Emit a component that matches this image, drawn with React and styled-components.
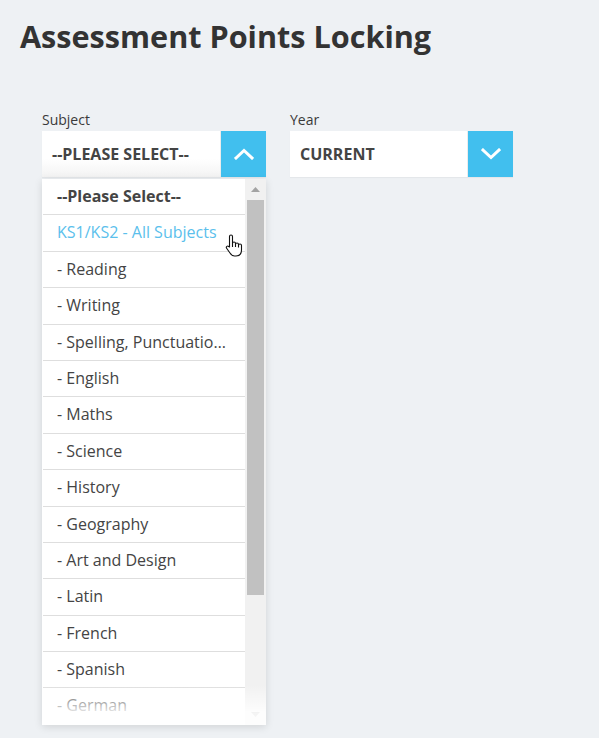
import React from 'react'
import styled, { createGlobalStyle } from 'styled-components'

const GlobalStyle = createGlobalStyle`
    html, body {
        margin: 0;
        padding: 0;
        background: #eef1f4;
        font-family: "Open Sans", "Liberation Sans", sans-serif;
        color: #444;
    }
    * { box-sizing: border-box; }
`;

const Page = styled.div`
    min-height: 738px;
    padding: 15px 20px 0 20px;
`;
const Title = styled.h1`
    margin: 0;
    font-size: 30.6px;
    line-height: 42px;
    font-weight: 700;
    color: #333;
`;
const FormRow = styled.div`
    display: flex;
    gap: 24px;
    margin: 53px 0 0 22px;
`;
const Field = styled.div`
    position: relative;
    width: ${p => p.w}px;
`;
const Label = styled.div`
    font-size: 14px;
    line-height: 19px;
    color: #3a3a3a;
    margin-bottom: 2px;
`;
const SelectBox = styled.div`
    display: flex;
    height: 46px;
    background: ${p => p.open ? 'linear-gradient(#fff 60%, #f3f3f3)' : '#fff'};
    box-shadow: 0 1px 1px rgba(0, 0, 0, 0.04);
`;
const SelectText = styled.div`
    flex: 1;
    display: flex;
    align-items: center;
    padding-left: 10px;
    font-size: 16px;
    font-weight: 700;
    color: #444;
    border-right: 1px solid #ececec;
`;
const ArrowButton = styled.div`
    width: 45px;
    background: #41bfee;
    display: flex;
    align-items: center;
    justify-content: center;
`;
const Dropdown = styled.div`
    position: absolute;
    top: 69px;
    left: 0;
    width: 224px;
    height: 546px;
    display: flex;
    background: #fff;
    box-shadow: 0 2px 8px rgba(0, 0, 0, 0.12);
    z-index: 2;
`;
const List = styled.div`
    flex: 1;
    min-width: 0;
    overflow: hidden;
    padding-left: 1px;
`;
const Option = styled.div`
    height: 36.4px;
    line-height: 35.4px;
    padding: 0 14px;
    font-size: 16px;
    font-weight: ${p => p.bold ? 700 : 400};
    color: ${p => p.active ? '#5bbfec' : '#444'};
    border-bottom: 1px solid #dedede;
    white-space: nowrap;
    overflow: hidden;
    text-overflow: ellipsis;
    &:last-child { border-bottom: none; }
`;
const Scrollbar = styled.div`
    width: 21px;
    background: #f1f1f1;
    display: flex;
    flex-direction: column;
    align-items: center;
    padding: 0 2px;
`;
const ScrollArrow = styled.div`
    height: 21px;
    display: flex;
    align-items: center;
    justify-content: center;
`;
const Track = styled.div`
    flex: 1;
    width: 100%;
`;
const Thumb = styled.div`
    height: 395px;
    background: #c1c1c1;
`;
const Fade = styled.div`
    position: absolute;
    left: 0;
    right: 0;
    bottom: 0;
    height: 40px;
    background: linear-gradient(rgba(255, 255, 255, 0), rgba(255, 255, 255, 0.88) 70%);
    pointer-events: none;
`;
const Cursor = styled.svg`
    position: absolute;
    left: 183px;
    top: 55px;
`;

const Chevron = ({ up }) => (
    <svg width="20" height="12" viewBox="0 0 20 12">
        <path d={up ? 'M2 10 L10 2.5 L18 10' : 'M2 2 L10 9.5 L18 2'} fill="none" stroke="#fff" strokeWidth="3" strokeLinecap="square" />
    </svg>
);

const Triangle = ({ up }) => (
    <svg width="9" height="5" viewBox="0 0 9 5">
        <path d={up ? 'M0 5 L4.5 0 L9 5 Z' : 'M0 0 L4.5 5 L9 0 Z'} fill="#a3a3a3" />
    </svg>
);

const subjects = [
    '- Reading', '- Writing', '- Spelling, Punctuation and Grammar', '- English', '- Maths',
    '- Science', '- History', '- Geography', '- Art and Design', '- Latin', '- French',
    '- Spanish', '- German'
];

export default function App() {
    return (
        <Page>
            <GlobalStyle />
            <Title>Assessment Points Locking</Title>
            <FormRow>
                <Field w={224}>
                    <Label>Subject</Label>
                    <SelectBox open>
                        <SelectText>--PLEASE SELECT--</SelectText>
                        <ArrowButton><Chevron up /></ArrowButton>
                    </SelectBox>
                    <Dropdown>
                        <List>
                            <Option bold>--Please Select--</Option>
                            <Option active>KS1/KS2 - All Subjects</Option>
                            {subjects.map(s => <Option key={s}>{s}</Option>)}
                        </List>
                        <Scrollbar>
                            <ScrollArrow><Triangle up /></ScrollArrow>
                            <Track><Thumb /></Track>
                            <ScrollArrow><Triangle /></ScrollArrow>
                        </Scrollbar>
                        <Fade />
                        <Cursor width="18" height="23" viewBox="0 0 18 23">
                            <path d="M4.5 13 V2.5 a1.5 1.5 0 0 1 3 0 V9.5 a1.5 1.5 0 0 1 3 0 V10.5 a1.5 1.5 0 0 1 3 0 V11.5 a1.5 1.5 0 0 1 3 0 V16 c0 3.5-2 6-5.5 6 H9.5 c-2 0-3.2-1-4.5-3 L1.6 14.2 a1.3 1.3 0 0 1 2.1-1.6 Z M7.5 9.5 V13 M10.5 10.5 V13 M13.5 11.5 V13.5"
                                fill="#fff" stroke="#111" strokeWidth="1.1" strokeLinejoin="round" />
                        </Cursor>
                    </Dropdown>
                </Field>
                <Field w={223}>
                    <Label>Year</Label>
                    <SelectBox>
                        <SelectText>CURRENT</SelectText>
                        <ArrowButton><Chevron /></ArrowButton>
                    </SelectBox>
                </Field>
            </FormRow>
        </Page>
    )
}
